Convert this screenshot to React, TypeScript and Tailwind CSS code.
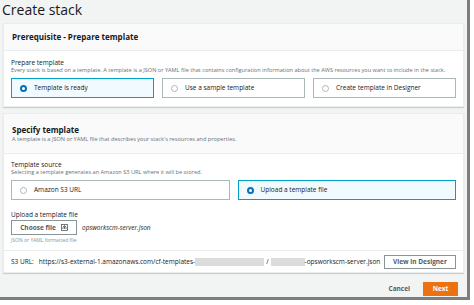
import React from "react";

function Radio({ checked }: { checked?: boolean }) {
  return checked ? (
    <span className="inline-block w-[7px] h-[7px] rounded-full border-[2px] border-[#0073bb] bg-white shrink-0" />
  ) : (
    <span className="inline-block w-[7px] h-[7px] rounded-full border border-[#aab7b8] bg-white shrink-0" />
  );
}

function Card({ label, checked }: { label: string; checked?: boolean }) {
  return (
    <div
      className={
        "h-[20px] flex items-center gap-[7px] pl-[8px] border " +
        (checked ? "bg-[#f1faff] border-[#00a1c9]" : "bg-white border-[#aab7b8]")
      }
    >
      <Radio checked={checked} />
      <span className="text-[6.5px] text-[#16191f]">{label}</span>
    </div>
  );
}

export default function App() {
  return (
    <div className="w-[474px] h-[305px] bg-white font-['Open_Sans',sans-serif] overflow-hidden">
      <div className="w-[470px] h-[300px] border-r-[3px] border-b-[3px] border-[#7d7d7d] bg-[#f2f3f3] flex flex-col">
        <div className="h-[23px] pl-[2px] text-[14px] leading-[19px] text-[#16191f]">Create stack</div>

        {/* Panel 1 */}
        <div className="ml-[3px] w-[461px] h-[84px] bg-white border border-[#eaeded] shadow-[0_1px_1px_rgba(0,0,0,0.15)] flex flex-col">
          <div className="h-[27px] bg-[#fafafa] border-b border-[#eaeded] flex items-center pl-[8px]">
            <span className="text-[8px] font-bold text-[#16191f]">Prerequisite - Prepare template</span>
          </div>
          <div className="px-[7px] pt-[8px]">
            <div className="text-[6.5px] leading-[8px] text-[#16191f]">Prepare template</div>
            <div className="text-[5.6px] leading-[7px] text-[#687078]">
              Every stack is based on a template. A template is a JSON or YAML file that contains configuration information about the AWS resources you want to include in the stack.
            </div>
            <div className="grid grid-cols-3 gap-[8px] mt-[4px]">
              <Card label="Template is ready" checked />
              <Card label="Use a sample template" />
              <Card label="Create template in Designer" />
            </div>
          </div>
        </div>

        {/* Panel 2 */}
        <div className="ml-[3px] mt-[6px] w-[461px] h-[160px] bg-white border border-[#eaeded] shadow-[0_1px_1px_rgba(0,0,0,0.15)] flex flex-col">
          <div className="h-[40px] shrink-0 bg-[#fafafa] border-b border-[#eaeded] flex flex-col justify-center pl-[8px]">
            <span className="text-[8px] leading-[11px] font-bold text-[#16191f]">Specify template</span>
            <span className="text-[5.6px] leading-[8px] text-[#687078]">
              A template is a JSON or YAML file that describes your stack's resources and properties.
            </span>
          </div>
          <div className="px-[7px] pt-[6px]">
            <div className="text-[6.5px] leading-[9px] text-[#16191f]">Template source</div>
            <div className="text-[5.6px] leading-[7px] text-[#687078]">
              Selecting a template generates an Amazon S3 URL where it will be stored.
            </div>
            <div className="grid grid-cols-2 gap-[8px] mt-[4px]">
              <Card label="Amazon S3 URL" />
              <Card label="Upload a template file" checked />
            </div>
            <div className="text-[6.5px] leading-[9px] text-[#16191f] mt-[10px]">Upload a template file</div>
            <div className="flex items-center gap-[5px] mt-[1px]">
              <div className="w-[66px] h-[15px] border border-[#879596] flex items-center justify-center gap-[5px]">
                <span className="text-[6.5px] font-bold text-[#545b64]">Choose file</span>
                <svg width="7" height="7" viewBox="0 0 7 7" fill="none" stroke="#545b64" strokeWidth="0.8">
                  <rect x="0.5" y="0.5" width="6" height="6" />
                  <path d="M0.5 4h6M3.5 1.5v3.5M2 3l1.5-1.5L5 3" />
                </svg>
              </div>
              <span className="text-[6.5px] italic text-[#16191f]">opsworkscm-server.json</span>
            </div>
            <div className="text-[5px] leading-[8px] text-[#879596] mt-[1px]">JSON or YAML formatted file</div>
          </div>
          <div className="mt-[6px] border-t border-[#eaeded] px-[7px] flex items-center h-[24px]">
            <span className="text-[6.5px] text-[#16191f]">S3 URL:</span>
            <span className="text-[6.5px] text-[#16191f] ml-[5px]">https://s3-external-1.amazonaws.com/cf-templates-</span>
            <span className="w-[69px] h-[8px] bg-[#dcdcdc]" />
            <span className="text-[6.5px] text-[#16191f] mx-[2px]">/</span>
            <span className="w-[34px] h-[8px] bg-[#dcdcdc]" />
            <span className="text-[6.5px] text-[#16191f]">-opsworkscm-server.json</span>
            <div className="ml-auto w-[72px] h-[14px] border border-[#879596] flex items-center justify-center">
              <span className="text-[6.5px] font-bold text-[#545b64]">View in Designer</span>
            </div>
          </div>
        </div>

        {/* Footer */}
        <div className="flex items-center justify-end pr-[9px] mt-[9px] gap-[13px]">
          <span className="text-[6.5px] font-bold text-[#545b64]">Cancel</span>
          <div className="w-[35px] h-[14px] bg-[#ec7211] flex items-center justify-center">
            <span className="text-[6.5px] font-bold text-white">Next</span>
          </div>
        </div>
      </div>
    </div>
  );
}
